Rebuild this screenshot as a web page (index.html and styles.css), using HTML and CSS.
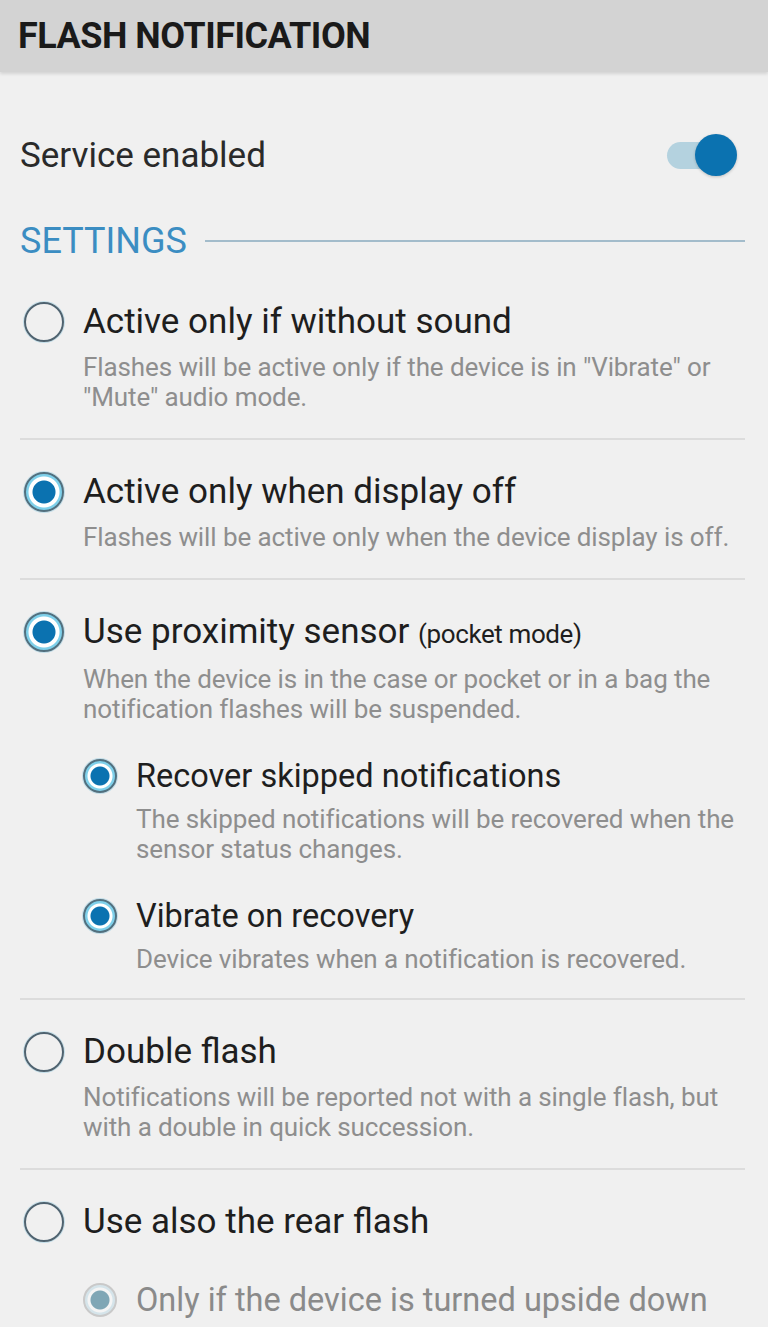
FILE: index.html
```html
<!DOCTYPE html>
<html lang="en">
<head>
  <meta charset="UTF-8" />
  <meta name="viewport" content="width=device-width, initial-scale=1.0"/>
  <title>Flash Notification</title>
  <link rel="stylesheet" href="styles.css">
</head>
<body>
  <header class="app-bar">
    <h1>FLASH NOTIFICATION</h1>
  </header>

  <main class="prefs">
    <div class="switch-row">
      <span class="switch-label">Service enabled</span>
      <span class="switch on">
        <span class="track"></span>
        <span class="thumb"></span>
      </span>
    </div>

    <div class="section-title">
      <span>SETTINGS</span>
      <span class="rule"></span>
    </div>

    <ul class="options">
      <li class="option">
        <span class="radio"></span>
        <div class="text">
          <div class="title">Active only if without sound</div>
          <p class="summary">Flashes will be active only if the device is in "Vibrate" or "Mute" audio mode.</p>
        </div>
      </li>

      <li class="option">
        <span class="radio checked"></span>
        <div class="text">
          <div class="title">Active only when display off</div>
          <p class="summary">Flashes will be active only when the device display is off.</p>
        </div>
      </li>

      <li class="option nested">
        <span class="radio checked"></span>
        <div class="text">
          <div class="title">Use proximity sensor <small>(pocket mode)</small></div>
          <p class="summary">When the device is in the case or pocket or in a bag the notification flashes will be suspended.</p>

          <div class="sub-option first">
            <span class="radio small checked"></span>
            <div class="text">
              <div class="title">Recover skipped notifications</div>
              <p class="summary">The skipped notifications will be recovered when the sensor status changes.</p>
            </div>
          </div>

          <div class="sub-option">
            <span class="radio small checked"></span>
            <div class="text">
              <div class="title">Vibrate on recovery</div>
              <p class="summary">Device vibrates when a notification is recovered.</p>
            </div>
          </div>
        </div>
      </li>

      <li class="option">
        <span class="radio"></span>
        <div class="text">
          <div class="title">Double flash</div>
          <p class="summary">Notifications will be reported not with a single flash, but with a double in quick succession.</p>
        </div>
      </li>

      <li class="option last">
        <span class="radio"></span>
        <div class="text">
          <div class="title">Use also the rear flash</div>

          <div class="sub-option first disabled">
            <span class="radio small checked"></span>
            <div class="text">
              <div class="title">Only if the device is turned upside down</div>
            </div>
          </div>
        </div>
      </li>
    </ul>
  </main>
</body>
</html>
```

FILE: styles.css
```css
body {
  margin: 0;
  font-family: Roboto, "Noto Sans", sans-serif;
  background-color: #f0f0f0;
  color: #222;
  overflow: hidden;
}

.app-bar {
  height: 72px;
  background-color: #d3d3d3;
  box-shadow: 0 2px 3px rgba(0, 0, 0, 0.12);
  display: flex;
  align-items: center;
  padding-left: 18px;
}

.app-bar h1 {
  margin: 0;
  font-size: 36px;
  font-weight: 700;
  letter-spacing: -0.5px;
  color: #1a1a1a;
}

.prefs {
  padding: 0 23px 0 20px;
}

/* service switch */
.switch-row {
  display: flex;
  align-items: center;
  justify-content: space-between;
  margin-top: 61px;
  height: 44px;
}

.switch-label {
  font-size: 35px;
  color: #2a2a2a;
}

.switch {
  position: relative;
  width: 70px;
  height: 44px;
  margin-right: 8px;
}

.switch .track {
  position: absolute;
  left: 0;
  top: 9px;
  width: 62px;
  height: 27px;
  border-radius: 14px;
  background-color: #b4d2df;
}

.switch .thumb {
  position: absolute;
  right: 0;
  top: 1px;
  width: 42px;
  height: 42px;
  border-radius: 50%;
  background-color: #0b72b0;
  box-shadow: 0 1px 3px rgba(0, 0, 0, 0.2);
}

/* section header */
.section-title {
  display: flex;
  align-items: center;
  gap: 18px;
  margin-top: 44px;
  margin-bottom: 9px;
  height: 40px;
  font-size: 36px;
  color: #3b8dc2;
}

.section-title .rule {
  flex: 1;
  height: 2px;
  background-color: #a3bccb;
}

/* option rows */
.options {
  list-style: none;
  margin: 0;
  padding: 0;
}

.option {
  display: flex;
  align-items: flex-start;
  padding: 30px 0 26px;
  border-bottom: 2px solid #dcdcdc;
}

.option.nested {
  padding-bottom: 24px;
}

.option.last {
  border-bottom: none;
}

.option > .radio {
  margin-left: 4px;
  margin-top: 2px;
  margin-right: 19px;
}

.text {
  flex: 1;
}

.title {
  font-size: 35px;
  line-height: 44px;
  color: #1e1e1e;
  white-space: nowrap;
}

.title small {
  font-size: 26px;
  letter-spacing: -0.4px;
}

.summary {
  margin: 8px 0 0;
  font-size: 26px;
  line-height: 30px;
  color: #8e8e8e;
  letter-spacing: -0.1px;
}

/* nested options under a parent row */
.sub-option {
  display: flex;
  align-items: flex-start;
  margin-top: 30px;
}

.sub-option.first {
  margin-top: 30px;
}

.sub-option .title {
  font-size: 32.5px;
}

.sub-option .summary {
  margin-top: 6px;
}

.sub-option > .radio {
  margin-top: 5px;
  margin-right: 19px;
}

.option.last .sub-option.first {
  margin-top: 34px;
}

.sub-option.disabled .title {
  color: #8a8a8a;
}

/* radio buttons */
.radio {
  flex: none;
  box-sizing: border-box;
  width: 40px;
  height: 40px;
  border-radius: 50%;
  border: 2px solid #4f6370;
  box-shadow: 0 0 0 1px rgba(140, 200, 225, 0.45);
}

.radio.small {
  width: 34px;
  height: 34px;
}

.radio.checked {
  border-color: #51707f;
  background: radial-gradient(circle, #0b72b0 0, #0b72b0 11px, #fff 12px, #fff 15px, #7fd0ea 16px);
}

.radio.small.checked {
  background: radial-gradient(circle, #0b72b0 0, #0b72b0 9px, #fff 10px, #fff 12px, #7fd0ea 13px);
}

.disabled .radio.small.checked {
  border-color: #c9c9c9;
  box-shadow: none;
  background: radial-gradient(circle, #7fa6b5 0, #7fa6b5 9px, #f4f4f4 10px, #f4f4f4 12px, #d5e4ea 13px);
}
```
